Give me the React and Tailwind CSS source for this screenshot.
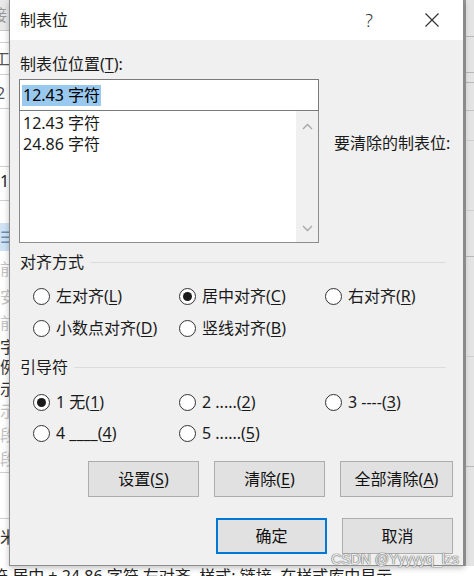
import React from "react";

const font = "font-['Noto_Sans','Noto_Sans_CJK_SC',sans-serif]";

const Radio = ({ checked, children }) => (
  <div className="flex h-[20px] items-center gap-[6px]">
    <span className="flex h-[17px] w-[17px] shrink-0 items-center justify-center rounded-full border border-[#333] bg-white">
      {checked && <span className="h-[9px] w-[9px] rounded-full bg-[#1a1a1a]" />}
    </span>
    <span className="whitespace-nowrap">{children}</span>
  </div>
);

const Section = ({ title }) => (
  <div className="ml-px mr-[7px] flex h-[20px] items-center gap-[6px]">
    <span className="whitespace-nowrap">{title}</span>
    <span className="h-px flex-1 bg-[#dcdcdc]" />
  </div>
);

const Btn = ({ children, primary, w = "w-[111px]" }) => (
  <button
    className={
      primary
        ? `${w} h-[36px] border-2 border-[#0078d7] bg-[#e1e1e1] text-[16px] text-[#111]`
        : `${w} h-[36px] border border-[#adadad] bg-[#e1e1e1] text-[16px] text-[#111]`
    }
  >
    {children}
  </button>
);

const Chevron = ({ up }) => (
  <svg width="11" height="7" viewBox="0 0 11 7" fill="none" stroke="#a6a6a6" strokeWidth="1.3">
    {up ? <path d="M1 6 L5.5 1.5 L10 6" /> : <path d="M1 1 L5.5 5.5 L10 1" />}
  </svg>
);

const LeftStrip = () => (
  <div className="flex w-[9px] shrink-0 flex-col overflow-hidden bg-white text-[16px] leading-[20px] text-[#555]">
    <div className="h-[31px] border-b border-[#c8c8c8] bg-[#e8e8e8] pt-[5px] text-[#999]">
      <span className="-ml-[9px]">接</span>
    </div>
    <div className="h-[12px] border-b border-[#d0d0d0]" />
    <div className="h-[32px] border-b border-[#d0d0d0] pt-[6px]">
      <span className="-ml-[6px]">工</span>
    </div>
    <div className="h-[34px] border-b border-[#d0d0d0] pt-[8px]">
      <span className="-ml-[4px]">2</span>
    </div>
    <div className="h-[58px] border-b border-[#d0d0d0]" />
    <div className="h-[34px] border-b border-[#d0d0d0] pt-[4px] text-[#222]">1(</div>
    <div className="h-[22px]" />
    <div className="h-[28px] bg-[#cfe3f5] pt-[4px] text-[#6a8fb5]">☰</div>
    <div className="h-[36px] pt-[8px] text-[#c4c4c4]">前</div>
    <div className="h-[26px] text-[#c4c4c4]">安</div>
    <div className="h-[24px] text-[#c4c4c4]">前</div>
    <div className="h-[20px] text-[#333]">字</div>
    <div className="h-[22px] text-[#333]">例</div>
    <div className="h-[22px] text-[#333]">示</div>
    <div className="h-[24px] text-[#c4c4c4]">示</div>
    <div className="h-[24px] text-[#c4c4c4]">段</div>
    <div className="h-[24px] border-b border-[#d0d0d0] text-[#c4c4c4]">段</div>
    <div className="h-[46px] border-b border-[#d0d0d0]" />
    <div className="h-[30px] pt-[8px] text-[#333]">米</div>
  </div>
);

const RightStrip = () => (
  <div className="flex w-[10px] shrink-0 flex-col border-l-2 border-[#9a9a9a] bg-[#e4e4e4]">
    <div className="h-[37px] border-b border-[#b8b8b8]" />
    <div className="h-[36px] border-b border-[#b8b8b8]" />
    <div className="h-[10px] border-b border-[#b8b8b8]" />
    <div className="h-[28px] border-b border-[#c4c4c4]" />
    <div className="h-[30px] border-b border-[#d0d0d0]" />
    <div className="h-[70px] border-b border-[#d0d0d0]" />
    <div className="h-[46px] border-b border-[#b8b8b8]" />
    <div className="h-[100px] border-b border-[#d0d0d0]" />
    <div className="h-[110px] border-b border-[#b8b8b8]" />
    <div className="flex-1" />
  </div>
);

export default function App() {
  return (
    <div className={`${font} flex h-[576px] w-[474px] flex-col overflow-hidden bg-white text-[16px] leading-[20px] text-[#1a1a1a]`}>
      <div className="flex h-[566px]">
        <LeftStrip />

        <div className="relative flex w-[455px] shrink-0 flex-col border-x border-b border-[#8c8c8c] shadow-[0_2px_6px_rgba(0,0,0,0.25)]">
          {/* title bar */}
          <div className="flex h-[40px] items-center bg-white pl-[10px] pr-[24px]">
            <span className="flex-1 text-[16px]">制表位</span>
            <span className="mr-[52px] text-[18px] font-light text-[#333]">?</span>
            <svg width="14" height="14" viewBox="0 0 14 14" stroke="#333" strokeWidth="1.2">
              <path d="M0.5 0.5 L13.5 13.5 M13.5 0.5 L0.5 13.5" />
            </svg>
          </div>

          {/* body */}
          <div className="flex flex-1 flex-col bg-[#f0f0f0] pl-[9px] pr-[10px] pt-[14px]">
            <div className="ml-px">
              制表位位置(<u className="underline-offset-2">T</u>):
            </div>

            <div className="mt-[5px] flex">
              <div className="flex w-[300px] flex-col">
                <div className="flex h-[32px] items-center border border-[#7a7a7a] bg-white pl-[2px]">
                  <span className="bg-[#99c9ef] px-px leading-[21px] text-black">12.43 字符</span>
                </div>
                <div className="flex h-[132px] border border-t-0 border-[#8c8c8c] bg-white">
                  <div className="flex-1 pl-[3px] pt-[2px] leading-[21px]">
                    <div>12.43 字符</div>
                    <div>24.86 字符</div>
                  </div>
                  <div className="flex w-[22px] flex-col items-center justify-between bg-[#f0f0f0] pb-[10px] pt-[12px]">
                    <Chevron up />
                    <Chevron />
                  </div>
                </div>
              </div>
              <div className="ml-[15px] mt-[54px] whitespace-nowrap">要清除的制表位:</div>
            </div>

            <div className="mt-[9px]">
              <Section title="对齐方式" />
            </div>
            <div className="ml-[14px] mt-[14px] grid grid-cols-[146px_146px_146px] gap-y-[12px]">
              <Radio>左对齐(<u className="underline-offset-2">L</u>)</Radio>
              <Radio checked>居中对齐(<u className="underline-offset-2">C</u>)</Radio>
              <Radio>右对齐(<u className="underline-offset-2">R</u>)</Radio>
              <Radio>小数点对齐(<u className="underline-offset-2">D</u>)</Radio>
              <Radio>竖线对齐(<u className="underline-offset-2">B</u>)</Radio>
            </div>

            <div className="mt-[19px]">
              <Section title="引导符" />
            </div>
            <div className="ml-[14px] mt-[15px] grid grid-cols-[146px_146px_146px] gap-y-[11px]">
              <Radio checked>1 无(<u className="underline-offset-2">1</u>)</Radio>
              <Radio>2 .....(<u className="underline-offset-2">2</u>)</Radio>
              <Radio>3 ----(<u className="underline-offset-2">3</u>)</Radio>
              <Radio>4 ____(<u className="underline-offset-2">4</u>)</Radio>
              <Radio>5 ......(<u className="underline-offset-2">5</u>)</Radio>
            </div>

            <div className="mt-[18px] flex justify-end gap-[15px]">
              <Btn>设置(<u className="underline-offset-2">S</u>)</Btn>
              <Btn>清除(<u className="underline-offset-2">E</u>)</Btn>
              <Btn w="w-[113px]">全部清除(<u className="underline-offset-2">A</u>)</Btn>
            </div>
            <div className="mt-[21px] flex justify-end gap-[15px]">
              <Btn primary>确定</Btn>
              <Btn w="w-[111px]">取消</Btn>
            </div>
          </div>

          {/* watermark */}
          <span className="absolute -bottom-[2px] right-[4px] font-['Liberation_Sans',sans-serif] text-[14px] leading-[16px] text-[#ececec] [text-shadow:0_0_1px_#707070,0_0_1px_#707070,0_0_1px_#707070]">
            CSDN @Yyyyyq_lzs
          </span>
        </div>

        <RightStrip />
      </div>

      <div className="h-[10px] overflow-hidden whitespace-nowrap text-[16px] leading-[20px] text-[#222]">
        <span className="-ml-[8px]">符 居中 + 24.86 字符 左对齐, 样式: 链接, 在样式库中显示</span>
      </div>
    </div>
  );
}
